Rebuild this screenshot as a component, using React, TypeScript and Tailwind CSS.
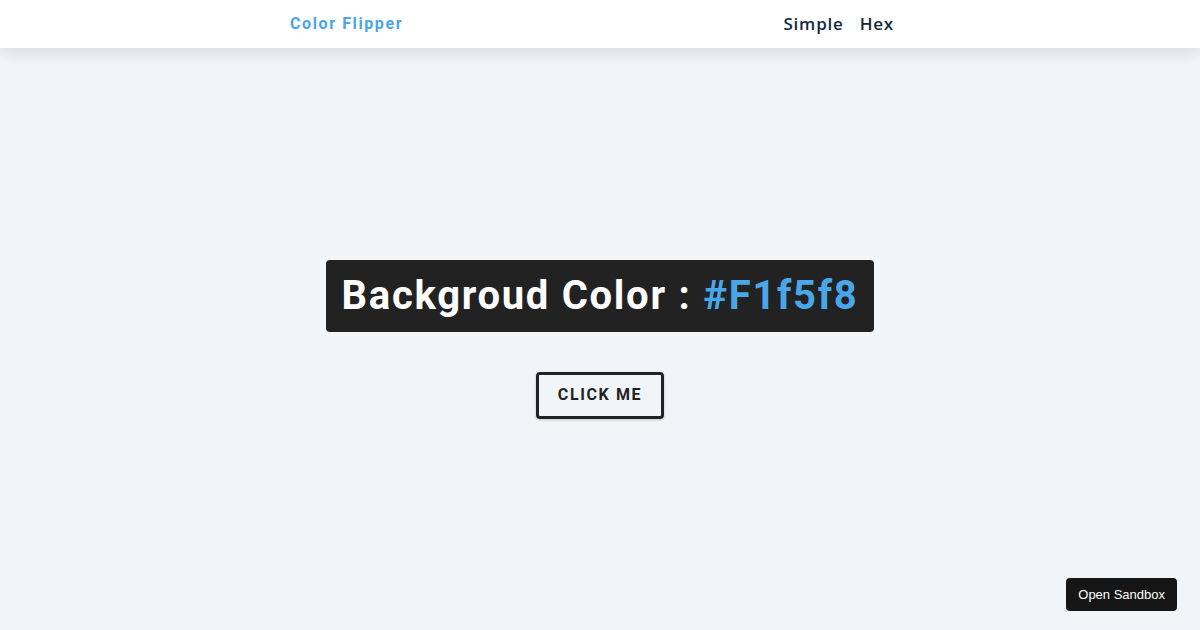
import React, { useState } from 'react';

const colors = ['#F1f5f8', '#f15025', '#2f9e6b', '#a855f7'];

export default function App() {
  const [color, setColor] = useState(colors[0]);

  const handleClick = () => {
    const next = colors[Math.floor(Math.random() * colors.length)];
    setColor(next);
  };

  return (
    <div className="min-h-screen bg-[#f1f5f8] font-['Roboto',sans-serif]">
      {/* Navbar */}
      <nav className="h-12 bg-white shadow-[0_5px_15px_rgba(0,0,0,0.1)] flex items-center">
        <div className="w-[90vw] max-w-[620px] mx-auto flex items-center justify-between">
          <h4 className="text-[16px] font-bold tracking-[1.6px] text-[#49a6e9]">
            Color Flipper
          </h4>
          <ul className="flex font-['Open_Sans',sans-serif]">
            <li>
              <a href="#" className="mr-4 text-[17px] font-semibold tracking-[0.8px] text-[#102a42]">
                Simple
              </a>
            </li>
            <li>
              <a href="#" className="mr-4 text-[17px] font-semibold tracking-[0.8px] text-[#102a42]">
                Hex
              </a>
            </li>
          </ul>
        </div>
      </nav>

      {/* Main Content */}
      <main className="h-[calc(100vh-48px)] grid place-items-center">
        <div className="flex flex-col items-center">
          <h2 className="bg-[#222] text-white rounded px-4 h-[72px] flex items-center text-[40px] font-bold tracking-[1.7px] mb-10">
            Backgroud Color : <span className="ml-3 text-[#49a6e9]">{color}</span>
          </h2>
          <button
            onClick={handleClick}
            className="w-32 h-[47px] border-[3px] border-[#222] rounded text-[#222] text-base font-bold uppercase tracking-[1.6px] shadow-[0_1px_3px_rgba(0,0,0,0.2)]"
          >
            click me
          </button>
        </div>
      </main>

      <button className="fixed right-[23px] bottom-[19px] bg-[#151515] text-white text-[13px] font-['Liberation_Sans',sans-serif] rounded px-3 h-[33px]">
        Open Sandbox
      </button>
    </div>
  );
}
